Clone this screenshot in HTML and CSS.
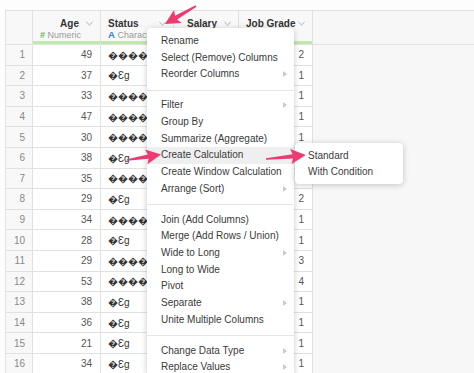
FILE: index.html
```html
<!DOCTYPE html>
<html>
  <head>
    <title>Data Frame</title>
    <link rel="stylesheet" href="styles.css">
  </head>
  <body>
    <div class="topbar"></div>

    <table class="grid">
      <colgroup>
        <col class="w-rn">
        <col class="w-age">
        <col class="w-status">
        <col class="w-salary">
        <col class="w-grade">
        <col>
      </colgroup>
      <thead>
        <tr>
          <th class="rn"></th>
          <th class="col">
            <div class="hd num"><span class="name">Age</span><svg class="chev" viewBox="0 0 8 5"><path d="M.5.8 4 4.2 7.5.8"/></svg></div>
            <div class="type"><b class="t-num">#</b> Numeric</div>
          </th>
          <th class="col">
            <div class="hd"><span class="name">Status</span><svg class="chev" viewBox="0 0 8 5"><path d="M.5.8 4 4.2 7.5.8"/></svg></div>
            <div class="type"><b class="t-chr">A</b> Character</div>
          </th>
          <th class="col">
            <div class="hd num"><span class="name">Salary</span><svg class="chev" viewBox="0 0 8 5"><path d="M.5.8 4 4.2 7.5.8"/></svg></div>
          </th>
          <th class="col">
            <div class="hd"><span class="name">Job Grade</span><svg class="chev" viewBox="0 0 8 5"><path d="M.5.8 4 4.2 7.5.8"/></svg></div>
          </th>
          <th class="fill"></th>
        </tr>
      </thead>
      <tbody>
        <tr><td class="rn">1</td><td class="num">49</td><td class="chr">����</td><td></td><td class="num">2</td><td class="fill"></td></tr>
        <tr><td class="rn">2</td><td class="num">37</td><td class="chr">�Ɛg</td><td></td><td class="num">1</td><td class="fill"></td></tr>
        <tr><td class="rn">3</td><td class="num">33</td><td class="chr">����</td><td></td><td class="num">1</td><td class="fill"></td></tr>
        <tr><td class="rn">4</td><td class="num">47</td><td class="chr">����</td><td></td><td class="num">1</td><td class="fill"></td></tr>
        <tr><td class="rn">5</td><td class="num">30</td><td class="chr">����</td><td></td><td class="num">1</td><td class="fill"></td></tr>
        <tr><td class="rn">6</td><td class="num">38</td><td class="chr">�Ɛg</td><td></td><td class="num">1</td><td class="fill"></td></tr>
        <tr><td class="rn">7</td><td class="num">35</td><td class="chr">����</td><td></td><td class="num">1</td><td class="fill"></td></tr>
        <tr><td class="rn">8</td><td class="num">29</td><td class="chr">�Ɛg</td><td></td><td class="num">2</td><td class="fill"></td></tr>
        <tr><td class="rn">9</td><td class="num">34</td><td class="chr">����</td><td></td><td class="num">1</td><td class="fill"></td></tr>
        <tr><td class="rn">10</td><td class="num">28</td><td class="chr">�Ɛg</td><td></td><td class="num">1</td><td class="fill"></td></tr>
        <tr><td class="rn">11</td><td class="num">29</td><td class="chr">����</td><td></td><td class="num">3</td><td class="fill"></td></tr>
        <tr><td class="rn">12</td><td class="num">53</td><td class="chr">����</td><td></td><td class="num">4</td><td class="fill"></td></tr>
        <tr><td class="rn">13</td><td class="num">38</td><td class="chr">�Ɛg</td><td></td><td class="num">1</td><td class="fill"></td></tr>
        <tr><td class="rn">14</td><td class="num">36</td><td class="chr">�Ɛg</td><td></td><td class="num">1</td><td class="fill"></td></tr>
        <tr><td class="rn">15</td><td class="num">21</td><td class="chr">�Ɛg</td><td></td><td class="num">1</td><td class="fill"></td></tr>
        <tr><td class="rn">16</td><td class="num">34</td><td class="chr">�Ɛg</td><td></td><td class="num">1</td><td class="fill"></td></tr>
      </tbody>
    </table>

    <!-- column menu -->
    <ul class="menu">
      <li>Rename</li>
      <li>Select (Remove) Columns</li>
      <li class="sub">Reorder Columns</li>
      <li class="sep"></li>
      <li class="sub">Filter</li>
      <li>Group By</li>
      <li>Summarize (Aggregate)</li>
      <li class="active">Create Calculation</li>
      <li>Create Window Calculation</li>
      <li class="sub">Arrange (Sort)</li>
      <li class="sep"></li>
      <li>Join (Add Columns)</li>
      <li>Merge (Add Rows / Union)</li>
      <li class="sub">Wide to Long</li>
      <li>Long to Wide</li>
      <li>Pivot</li>
      <li class="sub">Separate</li>
      <li>Unite Multiple Columns</li>
      <li class="sep"></li>
      <li class="sub">Change Data Type</li>
      <li class="sub">Replace Values</li>
    </ul>

    <ul class="menu submenu">
      <li>Standard</li>
      <li>With Condition</li>
    </ul>

    <!-- callout arrows -->
    <svg class="arrows" width="474" height="373">
      <polygon transform="translate(196,6) rotate(149.9)" points="0,-0.8 23,-2.2 21,-7.5 36,0 21,7.5 23,2.2 0,0.8"/>
      <polygon transform="translate(127,160) rotate(-9.2)" points="0,-0.8 21.5,-2.2 19.5,-7.5 34.5,0 19.5,7.5 21.5,2.2 0,0.8"/>
      <polygon transform="translate(266,159) rotate(-5.7)" points="0,-0.8 27,-2.2 25,-7.5 40,0 25,7.5 27,2.2 0,0.8"/>
    </svg>
  </body>
</html>
```

FILE: styles.css
```css
html,
body {
  margin: 0;
  height: 373px;
  overflow: hidden;
}
body {
  position: relative;
  font-family: "Liberation Sans", Arial, sans-serif;
  background: #fdfdfd;
  color: #333;
}
.topbar {
  height: 10px;
}

.grid {
  margin-left: 5px;
  width: calc(100% - 5px);
  border-collapse: collapse;
  table-layout: fixed;
}
.w-rn {
  width: 27px;
}
.w-age {
  width: 68px;
}
.w-status {
  width: 73px;
}
.w-salary {
  width: 65px;
}
.w-grade {
  width: 74px;
}
.grid th,
.grid td {
  border: 1px solid #e1e1e1;
  padding: 0 7px;
  white-space: nowrap;
  overflow: hidden;
}
.grid thead tr {
  height: 34px;
}
.grid th {
  background: #f8f8f8;
  vertical-align: top;
  text-align: left;
  padding-top: 6px;
}
.grid th.col {
  box-shadow: inset 0 -3px 0 #c0eaac;
}
.grid th.fill {
  border-right: none;
  background: #f7f7f7;
}
.hd {
  display: flex;
  align-items: center;
  height: 12px;
}
.hd .name {
  font-size: 10px;
  font-weight: bold;
  color: #333;
}
.hd.num .name {
  flex: 1;
  text-align: right;
}
.hd .chev {
  width: 7px;
  height: 5px;
  margin-left: auto;
  fill: none;
  stroke: #999;
  stroke-width: 0.9;
}
.hd.num .chev {
  margin-left: 7px;
}
.type {
  margin-top: 1px;
  font-size: 9px;
  font-weight: normal;
  color: #999;
  line-height: 10px;
}
.t-num {
  color: #5cb85c;
}
.t-chr {
  color: #2f7ed8;
  font-size: 9.5px;
}

.grid tbody tr {
  height: 20.6px;
}
.grid td {
  font-size: 10px;
  color: #555;
  background: #fff;
}
.grid td.rn {
  text-align: right;
  color: #888;
  background: #f8f8f8;
}
.grid td.num {
  text-align: right;
  padding-right: 8px;
}
.grid td.chr {
  color: #333;
}
.grid td.fill {
  border: none;
  background: #f7f7f7;
}

.menu {
  position: absolute;
  left: 147px;
  top: 28px;
  width: 147px;
  margin: 0;
  padding: 5px 0 0;
  list-style: none;
  background: #fff;
  border-radius: 4px;
  box-shadow: 0 1px 6px rgba(0, 0, 0, 0.22);
  font-size: 10px;
  color: #3a3a3a;
}
.menu li {
  position: relative;
  height: 16.7px;
  line-height: 16.7px;
  padding-left: 14px;
  white-space: nowrap;
}
.menu li.active {
  background: #efefef;
}
.menu li.sub::after {
  content: "";
  position: absolute;
  right: 7px;
  top: 5px;
  border-left: 4px solid #cacaca;
  border-top: 3.5px solid transparent;
  border-bottom: 3.5px solid transparent;
}
.menu li.sep {
  height: 1px;
  margin: 6.6px 0;
  padding: 0;
  background: #e6e6e6;
}
.submenu {
  left: 295px;
  top: 143px;
  width: 108px;
  padding: 4.7px 0 3px;
}
.submenu li {
  padding-left: 13px;
}

.arrows {
  position: absolute;
  left: 0;
  top: 0;
  pointer-events: none;
  fill: #ec3a72;
}
```
